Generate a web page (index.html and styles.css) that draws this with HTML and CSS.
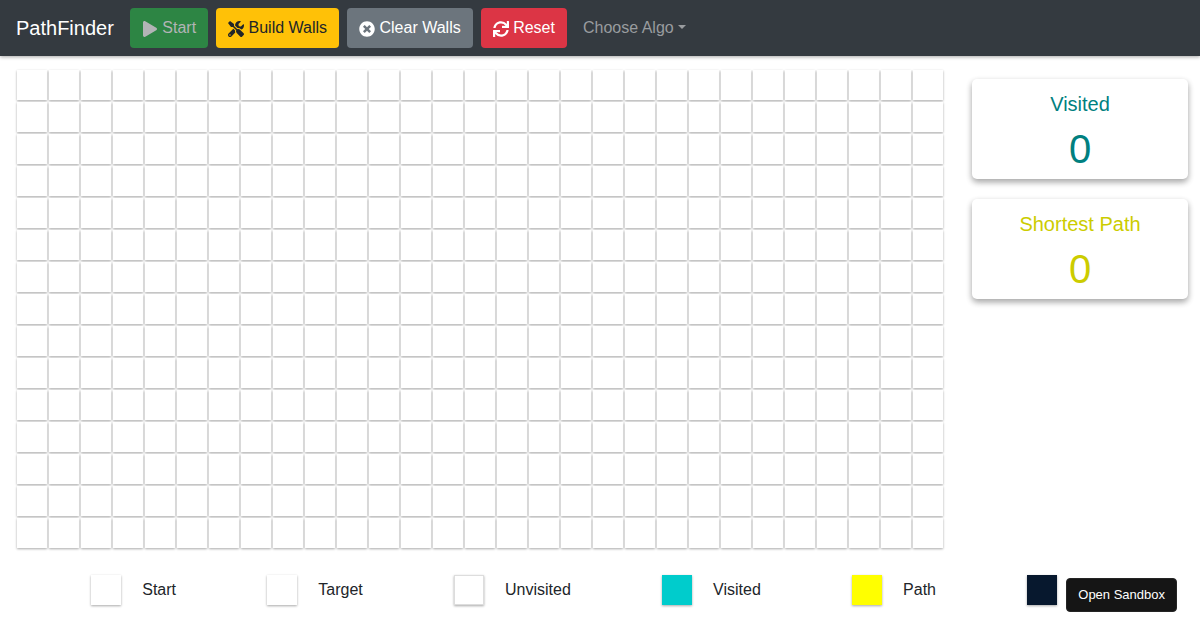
FILE: index.html
```html
<!DOCTYPE html>
<html lang="en">
<head>
  <meta charset="UTF-8" />
  <meta name="viewport" content="width=device-width, initial-scale=1.0" />
  <title>PathFinder</title>
  <link rel="stylesheet" href="styles.css">
</head>
<body>

  <nav class="navbar">
    <a href="#" class="brand">PathFinder</a>
    <button type="button" class="btn btn-success" disabled>
      <svg class="icon" viewBox="0 0 448 512"><path d="M424.400 214.700L72.400 6.600C43.800-10.300 0 6.100 0 47.900V464c0 37.500 40.700 60.100 72.400 41.300l352-208c31.400-18.500 31.500-64.100 0-82.600z"/></svg>
      Start
    </button>
    <button type="button" class="btn btn-warning">
      <svg class="icon" viewBox="0 0 512 512"><path d="M501.100 395.700L384 278.600c-23.100-23.100-57.600-27.600-85.400-13.900L192 158.100V96L64 0 0 64l96 128h62.100l106.600 106.600c-13.600 27.800-9.200 62.300 13.900 85.400l117.100 117.100c14.600 14.600 38.200 14.600 52.700 0l52.700-52.700c14.500-14.600 14.500-38.200 0-52.700zM331.700 225c28.300 0 54.900 11 74.900 31l19.400 19.400c15.800-6.900 30.800-16.500 43.800-29.500 37.100-37.100 49.700-89.300 37.900-136.700-2.200-9-13.500-12.100-20.100-5.500l-74.400 74.400-67.900-11.300L334 98.900l74.400-74.400c6.600-6.600 3.400-17.900-5.700-20.200-47.400-11.700-99.600.9-136.600 37.900-28.500 28.500-41.900 66.100-41.200 103.600l82.100 82.100c8.100-1.900 16.500-2.900 24.700-2.900zm-103.900 82l-56.700-56.700L18.700 402.800c-25 25-25 65.500 0 90.500s65.500 25 90.500 0l123.600-123.600c-7.600-19.900-9.900-41.600-5-62.700zM64 472c-13.200 0-24-10.800-24-24 0-13.300 10.700-24 24-24s24 10.700 24 24c0 13.200-10.700 24-24 24z"/></svg>
      Build Walls
    </button>
    <button type="button" class="btn btn-secondary">
      <svg class="icon" viewBox="0 0 512 512"><path d="M256 8C119 8 8 119 8 256s111 248 248 248 248-111 248-248S393 8 256 8zm121.600 313.100c4.700 4.700 4.700 12.300 0 17L338 377.600c-4.700 4.700-12.300 4.700-17 0L256 312l-65.100 65.600c-4.700 4.700-12.300 4.700-17 0L134.400 338c-4.700-4.700-4.700-12.300 0-17l65.600-65-65.600-65.100c-4.700-4.700-4.700-12.300 0-17l39.600-39.600c4.700-4.700 12.300-4.700 17 0l65 65.700 65.100-65.600c4.700-4.700 12.300-4.700 17 0l39.600 39.600c4.700 4.700 4.700 12.300 0 17L312 256l65.600 65.100z"/></svg>
      Clear Walls
    </button>
    <button type="button" class="btn btn-danger">
      <svg class="icon" viewBox="0 0 512 512"><path d="M440.650 12.570l4 82.770A247.160 247.160 0 0 0 255.830 8C134.730 8 33.910 94.920 12.290 209.820A12 12 0 0 0 24.090 224h49.050a12 12 0 0 0 11.670-9.260 175.910 175.910 0 0 1 317-56.940l-101.460-4.860a12 12 0 0 0-12.570 12v47.410a12 12 0 0 0 12 12H500a12 12 0 0 0 12-12V12a12 12 0 0 0-12-12h-47.370a12 12 0 0 0-11.980 12.570zM255.830 432a175.610 175.610 0 0 1-146-77.800l101.800 4.870a12 12 0 0 0 12.570-12v-47.400a12 12 0 0 0-12-12H12a12 12 0 0 0-12 12V500a12 12 0 0 0 12 12h47.350a12 12 0 0 0 12-12.600l-4.150-82.570A247.170 247.170 0 0 0 255.830 504c121.110 0 221.930-86.920 243.550-201.820a12 12 0 0 0-11.800-14.180h-49.050a12 12 0 0 0-11.670 9.260A175.860 175.860 0 0 1 255.830 432z"/></svg>
      Reset
    </button>
    <a href="#" class="dropdown-toggle">Choose Algo</a>
  </nav>

  <main class="content">
    <div class="board-wrapper">
      <div class="board" id="board"></div>
    </div>
    <aside class="stats">
      <div class="card visited-card">
        <h2>Visited</h2>
        <p>0</p>
      </div>
      <div class="card path-card">
        <h2>Shortest Path</h2>
        <p>0</p>
      </div>
    </aside>
  </main>

  <ul class="legend">
    <li><span class="node"></span>Start</li>
    <li><span class="node"></span>Target</li>
    <li><span class="node unvisited"></span>Unvisited</li>
    <li><span class="node visited"></span>Visited</li>
    <li><span class="node path"></span>Path</li>
    <li><span class="node wall"></span>Wall</li>
  </ul>

  <button type="button" class="sandbox-btn">Open Sandbox</button>

  <script>
    const ROWS = 15;
    const COLS = 29;
    const board = document.getElementById("board");

    for (let i = 0; i < ROWS * COLS; i++) {
      const node = document.createElement("div");
      node.className = "node";
      board.appendChild(node);
    }
  </script>
</body>
</html>
```
FILE: styles.css
```css
* {
  margin: 0;
  padding: 0;
  box-sizing: border-box;
}

body {
  background-color: #fff;
  color: #212529;
  font-family: "Liberation Sans", Arial, sans-serif;
  font-size: 16px;
  line-height: 24px;
}

button {
  font-family: inherit;
  cursor: pointer;
}

.navbar {
  display: flex;
  align-items: center;
  gap: 8px;
  padding: 8px 16px;
  background-color: #343a40;
  box-shadow: 0 1px 3px rgba(0, 0, 0, 0.12), 0 1px 4px rgba(0, 0, 0, 0.24);
}

.brand {
  margin-right: 8px;
  color: #fff;
  font-size: 20px;
  text-decoration: none;
}

.btn {
  height: 40px;
  padding: 0 11px;
  border: 1px solid transparent;
  border-radius: 4px;
  color: #fff;
  font-size: 16px;
  line-height: 24px;
  white-space: nowrap;
}

.icon {
  width: 16px;
  height: 16px;
  fill: currentColor;
  vertical-align: middle;
}

.btn-success {
  background-color: #2d8544;
  color: #b2b4b6;
}

.btn-warning {
  background-color: #ffc107;
  color: #212529;
}

.btn-secondary {
  background-color: #6c757d;
}

.btn-danger {
  background-color: #dc3545;
}

.dropdown-toggle {
  padding: 8px;
  color: #999c9f;
  text-decoration: none;
}

.dropdown-toggle::after {
  content: "";
  display: inline-block;
  margin-left: 4px;
  vertical-align: 4px;
  border-top: 4px solid;
  border-right: 4px solid transparent;
  border-left: 4px solid transparent;
}

.content {
  display: flex;
  padding-top: 13px;
}

.board-wrapper {
  width: 80%;
  padding-left: 16px;
}

.board {
  display: grid;
  grid-template-columns: repeat(29, 30px);
  gap: 2px;
  padding: 1px;
}

.node {
  width: 30px;
  height: 30px;
  background-color: #fff;
  box-shadow: 0 1px 3px rgba(0, 0, 0, 0.12), 0 1px 2px rgba(0, 0, 0, 0.24);
}

.stats {
  display: flex;
  flex-direction: column;
  gap: 20px;
  width: 20%;
  padding: 10px 12px;
}

.card {
  height: 100px;
  padding-top: 13px;
  border-radius: 5px;
  text-align: center;
  box-shadow: 0 3px 6px rgba(0, 0, 0, 0.16), 0 3px 6px rgba(0, 0, 0, 0.23);
}

.card h2 {
  font-size: 20px;
  font-weight: normal;
  line-height: 24px;
}

.card p {
  margin-top: 9px;
  font-size: 40px;
  line-height: 48px;
}

.visited-card {
  color: #008080;
}

.path-card {
  color: #cccc00;
}

.legend {
  display: flex;
  justify-content: space-evenly;
  padding: 26px 0 24px;
  list-style: none;
}

.legend li {
  display: flex;
  align-items: center;
  gap: 21px;
}

.unvisited {
  border: 1px solid #ddd;
}

.visited {
  background-color: #00cccc;
}

.path {
  background-color: #ffff00;
}

.wall {
  background-color: #07182e;
}

.sandbox-btn {
  position: fixed;
  right: 23px;
  bottom: 18px;
  height: 34px;
  padding: 0 11px 2px;
  border: 1px solid #252525;
  border-radius: 4px;
  background-color: #151515;
  color: #fff;
  font-size: 13px;
}
```
